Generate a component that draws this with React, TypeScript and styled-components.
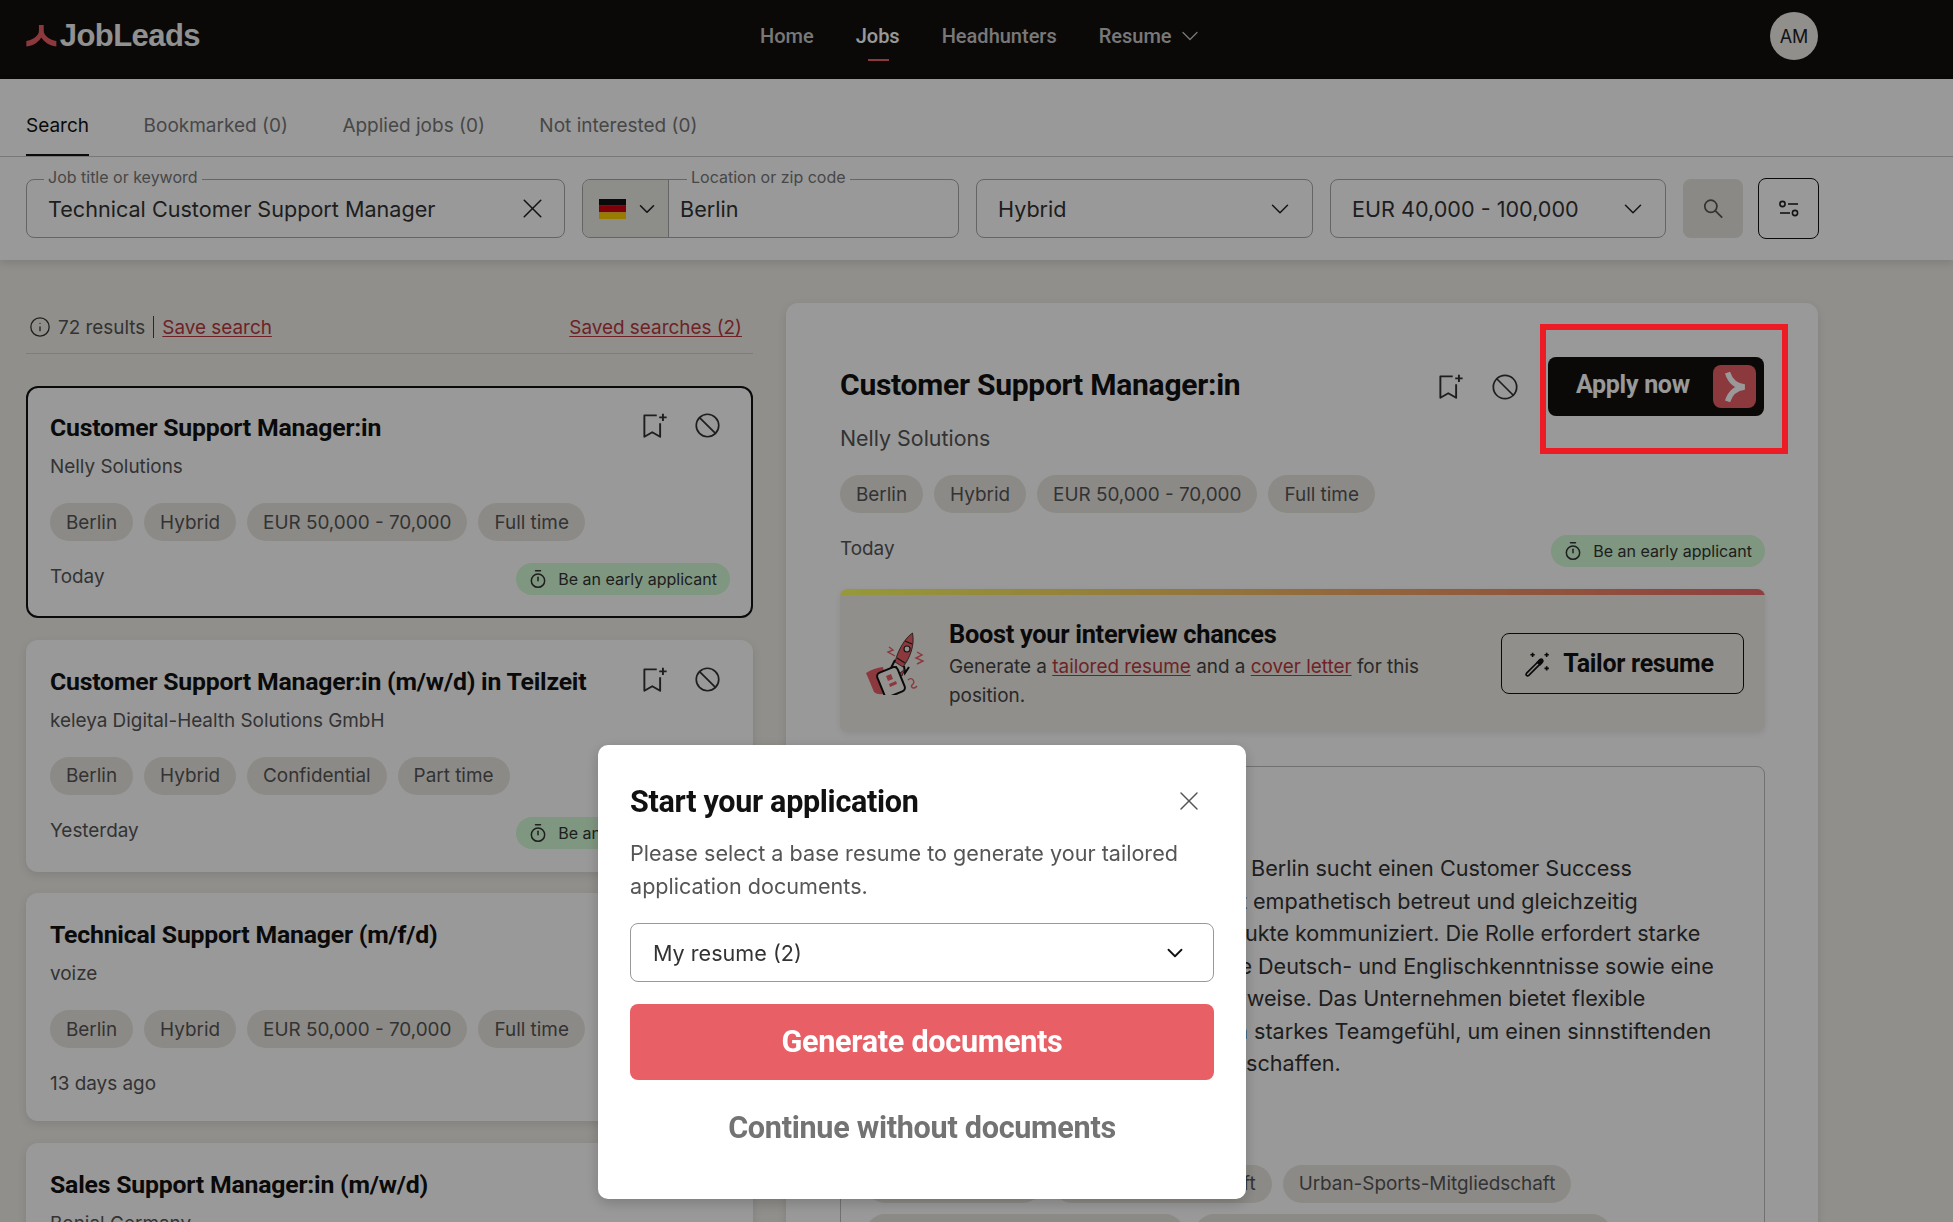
import React from "react";
import styled, { createGlobalStyle } from "styled-components";
import { Ban, ChevronDown, Info, X } from "lucide-react";

const headingFont = `"Roboto", "Liberation Sans", sans-serif`;

const GlobalStyle = createGlobalStyle`
    html, body {
        margin: 0;
        padding: 0;
        height: 100%;
        overflow: hidden;
        background: #f0eee9;
        font-family: "Inter", "Liberation Sans", sans-serif;
        color: #444;
    }
    * {
        box-sizing: border-box;
    }
`;

interface IJob {
    title: string;
    company: string;
    chips: string[];
    date: string;
    early?: boolean;
    selected?: boolean;
}

const jobs: IJob[] = [
    {
        title: "Customer Support Manager:in",
        company: "Nelly Solutions",
        chips: ["Berlin", "Hybrid", "EUR 50,000 - 70,000", "Full time"],
        date: "Today",
        early: true,
        selected: true,
    },
    {
        title: "Customer Support Manager:in (m/w/d) in Teilzeit",
        company: "keleya Digital-Health Solutions GmbH",
        chips: ["Berlin", "Hybrid", "Confidential", "Part time"],
        date: "Yesterday",
        early: true,
    },
    {
        title: "Technical Support Manager (m/f/d)",
        company: "voize",
        chips: ["Berlin", "Hybrid", "EUR 50,000 - 70,000", "Full time"],
        date: "13 days ago",
    },
    {
        title: "Sales Support Manager:in (m/w/d)",
        company: "Bonial Germany",
        chips: ["Berlin", "Hybrid", "EUR 50,000 - 70,000", "Full time"],
        date: "Today",
    },
];

// lead is what sits behind the dialog, its width keeps the visible part of each line in place
const summaryLines = [
    { lead: "Nelly Solutions, ein Start-up aus", width: 385, rest: "Berlin sucht einen Customer Success" },
    { lead: "Manager:in, der Kunden kompetent", width: 387, rest: "empathetisch betreut und gleichzeitig" },
    { lead: "den Mehrwert der Softwareprodukte", width: 429, rest: "kommuniziert. Die Rolle erfordert starke" },
    { lead: "Kommunikationsfähigkeiten, gute", width: 392, rest: "Deutsch- und Englischkenntnisse sowie eine" },
    { lead: "strukturierte Arbeitsweise.", width: 452, rest: "Das Unternehmen bietet flexible" },
    { lead: "Arbeitszeiten, Homeoffice und ein", width: 388, rest: "starkes Teamgefühl, um einen sinnstiftenden" },
    { lead: "Mehrwert für alle Kunden zu", width: 380, rest: "schaffen." },
];

const LogoMark = () => (
    <svg width="31" height="22" viewBox="0 0 30 22" fill="#e95f66">
        <path d="M12.6 0H17.4V6C17.4 11 24 15 30 16V21.5C22 20.5 17 16 15 12.5C13 16 8 20.5 0 21.5V16C6 15 12.6 11 12.6 6Z" />
    </svg>
);

const BookmarkPlus = () => (
    <svg width="27" height="27" viewBox="0 0 24 24" fill="none" stroke="#333" strokeWidth="1.7">
        <path d="M14 3H3V22L10 18L17 22V10" strokeLinejoin="round" />
        <path d="M19.5 1.5V8M16.2 4.8H22.8" />
    </svg>
);

const TimerIcon = () => (
    <svg width="20" height="20" viewBox="0 0 24 24" fill="none" stroke="#333" strokeWidth="1.8" strokeLinecap="round">
        <path d="M9 2H15" />
        <circle cx="12" cy="14" r="8" />
        <path d="M12 10V14" />
    </svg>
);

const SearchIcon = () => (
    <svg width="26" height="26" viewBox="0 0 24 24" fill="none" stroke="#555" strokeWidth="1.6">
        <circle cx="10" cy="9.5" r="5.6" />
        <path d="M14 13.5L20.5 20" />
    </svg>
);

const FilterIcon = () => (
    <svg width="22" height="20" viewBox="0 0 22 20" fill="none" stroke="#222" strokeWidth="1.6">
        <circle cx="4.5" cy="5" r="2.6" />
        <path d="M10 5H20" />
        <path d="M2 14H12" />
        <circle cx="17" cy="14" r="2.6" />
    </svg>
);

const WandIcon = () => (
    <svg width="26" height="26" viewBox="10 6 24 24" fill="none" stroke="#111" strokeWidth="1.6">
        <path d="M11.5 26.5L23 15C24.5 13.6 26.4 15.5 25 17L13.5 28.5C12 29.8 10.2 28 11.5 26.5Z" />
        <path d="M21.5 16.5C23 15 23.5 13.6 25 13.5C26.5 13.5 27 15.5 25.8 16.5L24 18.5Z" fill="#111" />
        <path d="M17 7.5V11.5M15 9.5H19M30 7.5V11.5M28 9.5H32M30 20V24M28 22H32" strokeWidth="1.5" />
    </svg>
);

const GermanFlag = () => (
    <svg width="27" height="20" viewBox="0 0 28 18" preserveAspectRatio="none">
        <rect width="28" height="6" y="0" fill="#111" />
        <rect width="28" height="6" y="6" fill="#d3010f" />
        <rect width="28" height="6" y="12" fill="#fccf00" />
    </svg>
);

const ApplyGlyph = () => (
    <svg width="26" height="32" viewBox="0 0 22 30" fill="none" stroke="#fff" strokeWidth="5">
        <path d="M4 1.5C6 8 11 14 20 15C11 16 6 22 4 28.5" />
    </svg>
);

const Rocket = () => (
    <svg width="60" height="63" viewBox="5 12 60 63" fill="none">
        <path d="M6 53Q14 48 23 47L29 73Q18 76 14 72Q10 62 6 53Z" fill="#e95f66" />
        <path d="M52.5 13C45 18 38 30 35 42L43 47C50 38 55 25 52.5 13Z" fill="#e95f66" stroke="#222" strokeWidth="0.8" />
        <path d="M45 21L52 24M37 38L45 43" stroke="#222" strokeWidth="1.2" />
        <circle cx="47" cy="29" r="3" fill="#f0eee9" stroke="#222" strokeWidth="1.2" />
        <path d="M35 40L31 48L37 47M44 46L45 53L49 47" stroke="#111" strokeWidth="2" />
        <path d="M33 47L40 53L45 49L42 56L36 56Z" fill="#e95f66" stroke="#222" strokeWidth="0.8" />
        <rect x="20" y="49" width="22" height="26" rx="4" transform="rotate(-22 31 62)" fill="#f6f4ef" stroke="#111" strokeWidth="2" />
        <path d="M26 56L31 54L33 59L28 61ZM29 64L36 61L37 64L30 67Z" fill="#e95f66" />
        <path d="M29 27L33 30L28 32L35 36" stroke="#e95f66" strokeWidth="1.4" />
        <path d="M57 32L62 35L56 38L63 41L57 44" stroke="#e95f66" strokeWidth="1.4" />
        <path d="M48 60C52 56 56 62 52 65C50 67 54 70 57 66" stroke="#e95f66" strokeWidth="1.4" />
    </svg>
);

const JobCard = ({ job }: { job: IJob }) => {
    return (
        <Card $selected={job.selected}>
            <CardHead>
                <CardTitle>{job.title}</CardTitle>
                <IconGroup>
                    <BookmarkPlus />
                    <Ban size={27} color="#333" strokeWidth={1.5} />
                </IconGroup>
            </CardHead>
            <Company>{job.company}</Company>
            <ChipRow>
                {job.chips.map((chip) => (
                    <Chip key={chip}>{chip}</Chip>
                ))}
            </ChipRow>
            <CardFoot>
                <DateText>{job.date}</DateText>
                {job.early && (
                    <EarlyBadge>
                        <TimerIcon />
                        Be an early applicant
                    </EarlyBadge>
                )}
            </CardFoot>
        </Card>
    );
};

const App = () => {
    return (
        <>
            <GlobalStyle />
            <Header>
                <Logo>
                    <LogoMark />
                    <LogoText>JobLeads</LogoText>
                </Logo>
                <Nav>
                    <NavItem>Home</NavItem>
                    <NavItem $active>Jobs</NavItem>
                    <NavItem>Headhunters</NavItem>
                    <NavItem>
                        Resume <ChevronDown size={28} strokeWidth={1.1} />
                    </NavItem>
                </Nav>
                <Avatar>AM</Avatar>
            </Header>

            <SubHeader>
                <TabBar>
                    <Tab $active>Search</Tab>
                    <Tab>Bookmarked (0)</Tab>
                    <Tab>Applied jobs (0)</Tab>
                    <Tab>Not interested (0)</Tab>
                </TabBar>
                <SearchRow>
                    <Field $width={539}>
                        <FieldLabel $left={17}>Job title or keyword</FieldLabel>
                        <FieldValue>Technical Customer Support Manager</FieldValue>
                        <ClearIcon>
                            <X size={33} strokeWidth={1.15} color="#222" />
                        </ClearIcon>
                    </Field>
                    <Field $width={377} $flush>
                        <FieldLabel $left={104}>Location or zip code</FieldLabel>
                        <FlagCell>
                            <GermanFlag />
                            <ChevronDown size={26} strokeWidth={1.5} color="#222" />
                        </FlagCell>
                        <FieldValue $inset>Berlin</FieldValue>
                    </Field>
                    <Field $width={337}>
                        <FieldValue>Hybrid</FieldValue>
                        <FieldIcon>
                            <ChevronDown size={30} strokeWidth={1.2} color="#222" />
                        </FieldIcon>
                    </Field>
                    <Field $width={336}>
                        <FieldValue>EUR 40,000 - 100,000</FieldValue>
                        <FieldIcon>
                            <ChevronDown size={30} strokeWidth={1.2} color="#222" />
                        </FieldIcon>
                    </Field>
                    <SearchButton>
                        <SearchIcon />
                    </SearchButton>
                    <FilterButton>
                        <FilterIcon />
                    </FilterButton>
                </SearchRow>
            </SubHeader>

            <Body>
                <LeftColumn>
                    <ResultsRow>
                        <ResultsInfo>
                            <InfoIcon>
                                <Info size={22} strokeWidth={1.4} color="#333" />
                            </InfoIcon>
                            72 results
                            <ResultsDivider />
                            <TextLink>Save search</TextLink>
                        </ResultsInfo>
                        <TextLink>Saved searches (2)</TextLink>
                    </ResultsRow>
                    <CardList>
                        {jobs.map((job) => (
                            <JobCard key={job.title} job={job} />
                        ))}
                    </CardList>
                </LeftColumn>

                <DetailPanel>
                    <DetailHead>
                        <DetailTitle>Customer Support Manager:in</DetailTitle>
                        <DetailIcons>
                            <BookmarkPlus />
                            <Ban size={28} color="#333" strokeWidth={1.5} />
                        </DetailIcons>
                        <ApplyButton>
                            <ApplyLabel>Apply now</ApplyLabel>
                            <ApplyIconBox>
                                <ApplyGlyph />
                            </ApplyIconBox>
                        </ApplyButton>
                    </DetailHead>
                    <DetailCompany>Nelly Solutions</DetailCompany>
                    <ChipRow>
                        {jobs[0].chips.map((chip) => (
                            <Chip key={chip}>{chip}</Chip>
                        ))}
                    </ChipRow>
                    <DetailMeta>
                        <DateText>Today</DateText>
                        <EarlyBadge>
                            <TimerIcon />
                            Be an early applicant
                        </EarlyBadge>
                    </DetailMeta>
                    <BoostBox>
                        <BoostRocket>
                            <Rocket />
                        </BoostRocket>
                        <BoostText>
                            <BoostTitle>Boost your interview chances</BoostTitle>
                            <BoostBody>
                                Generate a <TextLink>tailored resume</TextLink> and a <TextLink>cover letter</TextLink> for this position.
                            </BoostBody>
                        </BoostText>
                        <TailorButton>
                            <WandIcon />
                            Tailor resume
                        </TailorButton>
                    </BoostBox>
                    <SummaryBox>
                        <SummaryText>
                            {summaryLines.map((line) => (
                                <SummaryLine key={line.rest}>
                                    <SummaryLead $width={line.width}>{line.lead}</SummaryLead>
                                    {line.rest}
                                </SummaryLine>
                            ))}
                        </SummaryText>
                        <BenefitRow>
                            <Chip>Remote-Zugang</Chip>
                            <Chip>Starke Gemeinschaft</Chip>
                            <Chip>Urban-Sports-Mitgliedschaft</Chip>
                            <Chip>Betriebliche Altersvorsorge plus</Chip>
                            <Chip>Weiterbildungsbudget und Karriereplanung</Chip>
                        </BenefitRow>
                    </SummaryBox>
                </DetailPanel>
            </Body>

            <Overlay />
            <HighlightBox />

            <Modal>
                <ModalHead>
                    <ModalTitle>Start your application</ModalTitle>
                    <X size={32} strokeWidth={1.1} color="#555" />
                </ModalHead>
                <ModalText>Please select a base resume to generate your tailored application documents.</ModalText>
                <ModalSelect>
                    My resume (2)
                    <ChevronDown size={26} strokeWidth={1.7} color="#111" />
                </ModalSelect>
                <GenerateButton>Generate documents</GenerateButton>
                <ContinueButton>Continue without documents</ContinueButton>
            </Modal>
        </>
    );
};

export default App;

const Header = styled.header`
    display: flex;
    align-items: center;
    height: 79px;
    padding: 0 135px 7px 26px;
    background-color: #110f0d;
`;

const Logo = styled.div`
    display: flex;
    align-items: center;
    gap: 3px;
    width: 174px;
`;

const LogoText = styled.span`
    font-family: "Liberation Sans", sans-serif;
    font-size: 31px;
    font-weight: 700;
    letter-spacing: -0.55px;
    color: #f2f2f2;
`;

const Nav = styled.nav`
    display: flex;
    align-items: center;
    gap: 42px;
    margin-left: 560px;
`;

const NavItem = styled.span<{ $active?: boolean }>`
    position: relative;
    display: flex;
    align-items: center;
    gap: 4px;
    font-family: ${headingFont};
    font-size: 20px;
    font-weight: 500;
    color: ${(props) => (props.$active ? "#ffffff" : "#c8c8c8")};

    ${(props) =>
        props.$active &&
        `
        &::after {
            content: "";
            position: absolute;
            left: 50%;
            bottom: -13px;
            width: 21px;
            height: 2px;
            margin-left: -10px;
            background-color: #e95f66;
        }
    `}
`;

const Avatar = styled.div`
    display: flex;
    align-items: center;
    justify-content: center;
    width: 48px;
    height: 48px;
    margin-left: auto;
    border-radius: 50%;
    background-color: #f0eee9;
    font-size: 18px;
    color: #222;
`;

const SubHeader = styled.div`
    position: relative;
    background-color: #ffffff;
    box-shadow: 0 3px 8px rgba(0, 0, 0, 0.12);
`;

const TabBar = styled.div`
    display: flex;
    gap: 54.5px;
    padding-left: 26px;
    border-bottom: 1px solid #c9c9c9;
`;

const Tab = styled.div<{ $active?: boolean }>`
    padding: 32px 0 13px;
    font-size: 19px;
    line-height: 30px;
    color: ${(props) => (props.$active ? "#111" : "#777")};
    border-bottom: 2px solid ${(props) => (props.$active ? "#111" : "transparent")};
`;

const SearchRow = styled.div`
    display: flex;
    gap: 17px;
    padding: 22px 0 22px 26px;
`;

const Field = styled.div<{ $width: number; $flush?: boolean }>`
    position: relative;
    display: flex;
    align-items: center;
    justify-content: space-between;
    width: ${(props) => props.$width}px;
    height: 59px;
    padding: ${(props) => (props.$flush ? "0" : "0 22px 0 21px")};
    border: 1px solid #a8a8a8;
    border-radius: 8px;
`;

const FieldLabel = styled.label<{ $left: number }>`
    position: absolute;
    top: -13px;
    left: ${(props) => props.$left}px;
    padding: 0 4px;
    font-size: 16px;
    line-height: 20px;
    color: #777;
    background-color: #ffffff;
`;

const FieldValue = styled.span<{ $inset?: boolean }>`
    flex: 1;
    padding-left: ${(props) => (props.$inset ? "11px" : "0")};
    font-size: 21.6px;
    color: #333;
`;

const FieldIcon = styled.span`
    display: flex;
    margin-right: -5px;
`;

const ClearIcon = styled(FieldIcon)`
    margin-right: -7px;
`;

const FlagCell = styled.div`
    display: flex;
    align-items: center;
    gap: 8px;
    width: 86px;
    height: 100%;
    padding-left: 16px;
    background-color: #ecebe6;
    border-right: 1px solid #a8a8a8;
    border-radius: 8px 0 0 8px;
`;

const SearchButton = styled.button`
    display: flex;
    align-items: center;
    justify-content: center;
    width: 60px;
    height: 59px;
    padding: 0;
    border: none;
    border-radius: 8px;
    background-color: #e6e5e0;
`;

const FilterButton = styled.button`
    display: flex;
    align-items: center;
    justify-content: center;
    width: 61px;
    height: 61px;
    margin: -1px 0 -1px -2px;
    padding: 0;
    background: none;
    border: 1.5px solid #111;
    border-radius: 8px;
`;

const Body = styled.main`
    display: grid;
    grid-template-columns: 727px 1032px;
    column-gap: 33px;
    padding: 43px 0 0 26px;
`;

const LeftColumn = styled.div`
    display: flex;
    flex-direction: column;
    min-width: 0;
`;

const ResultsRow = styled.div`
    display: flex;
    align-items: center;
    justify-content: space-between;
    height: 51px;
    padding: 0 11px 2px 3px;
    border-bottom: 1px solid #d2d0cb;
    font-size: 18.9px;
    color: #555;
`;

const ResultsInfo = styled.div`
    display: flex;
    align-items: center;
    gap: 8px;
`;

const InfoIcon = styled.span`
    display: flex;
    margin-right: -1px;
`;

const ResultsDivider = styled.span`
    width: 1px;
    height: 22px;
    background-color: #444;
`;

const TextLink = styled.a`
    color: #b93a40;
    text-decoration: underline;
    text-underline-offset: 2px;
`;

const CardList = styled.div`
    display: flex;
    flex-direction: column;
    gap: 21.5px;
    margin-top: 32px;
`;

const Card = styled.article<{ $selected?: boolean }>`
    padding: ${(props) => (props.$selected ? "25px 21px 21px 22px" : "27px 23px 23px 24px")};
    background-color: #ffffff;
    border: ${(props) => (props.$selected ? "2px solid #111" : "none")};
    border-radius: 12px;
    box-shadow: ${(props) => (props.$selected ? "none" : "0 3px 8px rgba(0, 0, 0, 0.1)")};
`;

const CardHead = styled.div`
    display: flex;
    align-items: flex-start;
    justify-content: space-between;
`;

const CardTitle = styled.h3`
    margin: 0;
    font-family: ${headingFont};
    font-size: 24.8px;
    font-weight: 700;
    line-height: 30px;
    letter-spacing: -0.2px;
    color: #111;
`;

const IconGroup = styled.div`
    display: flex;
    align-items: center;
    gap: 26px;
    margin: -1px 9px 0 0;
`;

const Company = styled.div`
    margin-top: 10px;
    font-size: 18.9px;
    line-height: 28px;
    color: #555;
`;

const ChipRow = styled.div`
    display: flex;
    flex-wrap: wrap;
    gap: 11px;
    margin-top: 22px;
`;

const Chip = styled.span`
    display: inline-flex;
    align-items: center;
    height: 38px;
    padding: 0 16px;
    border-radius: 19px;
    background-color: #e9e7e1;
    font-size: 18.9px;
    color: #555;
    white-space: nowrap;
`;

const CardFoot = styled.div`
    display: flex;
    align-items: flex-start;
    justify-content: space-between;
    min-height: 28px;
    margin-top: 22px;
`;

const DateText = styled.span`
    font-size: 18.9px;
    line-height: 28px;
    color: #555;
`;

const EarlyBadge = styled.span`
    display: inline-flex;
    align-items: center;
    gap: 10px;
    height: 32px;
    padding: 0 13px 0 12px;
    border-radius: 16px;
    background-color: #d4fbd6;
    font-size: 16px;
    color: #333;
    white-space: nowrap;
`;

const DetailPanel = styled.section`
    height: 1000px;
    padding: 54px 53px 0 54px;
    background-color: #ffffff;
    border-radius: 12px;
    box-shadow: 0 3px 8px rgba(0, 0, 0, 0.1);
`;

const DetailHead = styled.div`
    display: flex;
    align-items: center;
`;

const DetailTitle = styled.h2`
    flex: 1;
    margin: 0;
    padding-bottom: 5px;
    font-family: ${headingFont};
    font-size: 30px;
    font-weight: 700;
    letter-spacing: -0.25px;
    color: #111;
`;

const DetailIcons = styled.div`
    display: flex;
    align-items: center;
    gap: 27px;
    margin-right: 29px;
`;

const ApplyButton = styled.button`
    display: flex;
    align-items: center;
    justify-content: space-between;
    width: 216px;
    height: 59px;
    margin-right: 1px;
    padding: 0 8px 0 28px;
    border: none;
    border-radius: 8px;
    background-color: #110f0d;
    font-family: ${headingFont};
    font-size: 25px;
    font-weight: 700;
    letter-spacing: -0.3px;
    color: #ffffff;
`;

const ApplyLabel = styled.span`
    padding-bottom: 5px;
`;

const ApplyIconBox = styled.span`
    display: flex;
    align-items: center;
    justify-content: center;
    width: 43px;
    height: 43px;
    border-radius: 8px;
    background-color: #e95f66;
`;

const DetailCompany = styled.div`
    margin-top: 7px;
    font-size: 21.4px;
    line-height: 30px;
    color: #555;
`;

const DetailMeta = styled.div`
    display: flex;
    align-items: flex-start;
    justify-content: space-between;
    margin-top: 22px;
`;

const BoostBox = styled.div`
    display: flex;
    align-items: center;
    height: 143px;
    margin-top: 22px;
    padding: 6px 21px 0 25px;
    border-radius: 8px;
    background-color: #f0eee9;
    background-image: linear-gradient(90deg, #fbff60, #ee6969);
    background-size: 100% 6px;
    background-repeat: no-repeat;
    box-shadow: 0 2px 6px rgba(0, 0, 0, 0.08);
`;

const BoostRocket = styled.div`
    display: flex;
    flex: none;
    margin-right: 24px;
`;

const BoostText = styled.div`
    flex: 1;
    margin-right: 40px;
`;

const BoostTitle = styled.div`
    margin-top: 2px;
    font-family: ${headingFont};
    font-size: 25.4px;
    font-weight: 700;
    line-height: 30px;
    letter-spacing: -0.3px;
    color: #111;
`;

const BoostBody = styled.p`
    margin: 4px 0 0;
    font-size: 18.9px;
    line-height: 28.6px;
    color: #444;
`;

const TailorButton = styled.button`
    display: flex;
    flex: none;
    align-items: center;
    justify-content: center;
    gap: 12px;
    width: 243px;
    height: 61px;
    padding: 0 6px 0 0;
    background: none;
    border: 1px solid #111;
    border-radius: 8px;
    font-family: ${headingFont};
    font-size: 25px;
    font-weight: 700;
    letter-spacing: -0.3px;
    color: #111;
`;

const SummaryBox = styled.div`
    height: 600px;
    margin-top: 34px;
    padding: 85px 24px 0 25px;
    border: 1px solid #bdbdbd;
    border-radius: 8px;
`;

const SummaryText = styled.div`
    font-size: 21.6px;
    line-height: 32.5px;
    white-space: nowrap;
    color: #333;
`;

const SummaryLine = styled.div`
    display: block;
`;

const SummaryLead = styled.span<{ $width: number }>`
    display: inline-block;
    width: ${(props) => props.$width}px;
    padding-right: 6px;
    text-align: right;
`;

const BenefitRow = styled(ChipRow)`
    margin-top: 85px;
`;

const Overlay = styled.div`
    position: fixed;
    inset: 0;
    background-color: rgba(0, 0, 0, 0.4);
`;

const HighlightBox = styled.div`
    position: fixed;
    top: 324px;
    left: 1540px;
    width: 248px;
    height: 130px;
    border: 6px solid #ed1c24;
`;

const Modal = styled.div`
    position: fixed;
    top: 745px;
    left: 598px;
    width: 648px;
    height: 454px;
    padding: 38px 32px 0;
    background-color: #ffffff;
    border-radius: 10px;
    box-shadow: 0 4px 14px rgba(0, 0, 0, 0.2);
`;

const ModalHead = styled.div`
    display: flex;
    align-items: center;
    justify-content: space-between;
    height: 36px;
    padding-right: 9px;
`;

const ModalTitle = styled.h2`
    margin: 0;
    font-family: ${headingFont};
    font-size: 30.5px;
    font-weight: 700;
    letter-spacing: -0.3px;
    color: #111;
`;

const ModalText = styled.p`
    margin: 18px 0 0;
    font-size: 21.6px;
    line-height: 32.5px;
    color: #555;
`;

const ModalSelect = styled.div`
    display: flex;
    align-items: center;
    justify-content: space-between;
    height: 59px;
    margin-top: 21px;
    padding: 0 25px 0 22px;
    border: 1px solid #999;
    border-radius: 8px;
    font-size: 21.6px;
    color: #333;
`;

const GenerateButton = styled.button`
    display: block;
    width: 100%;
    height: 76px;
    margin-top: 22px;
    padding: 0 0 2px;
    border: none;
    border-radius: 8px;
    background-color: #e85f66;
    font-family: ${headingFont};
    font-size: 30.6px;
    font-weight: 700;
    letter-spacing: -0.3px;
    color: #ffffff;
`;

const ContinueButton = styled.button`
    display: block;
    width: 100%;
    height: 40px;
    margin-top: 27px;
    padding: 0;
    background: none;
    border: none;
    font-family: ${headingFont};
    font-size: 30.6px;
    font-weight: 700;
    letter-spacing: -0.3px;
    color: #737373;
`;
